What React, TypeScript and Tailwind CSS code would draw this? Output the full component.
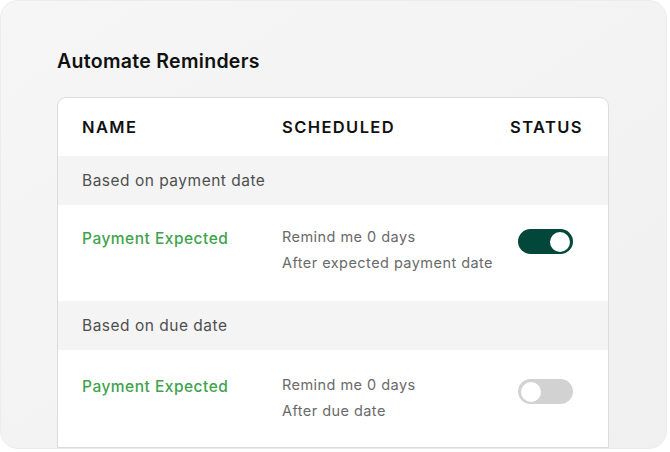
import React from "react";

function Toggle({ on }: { on: boolean }) {
  return (
    <div
      className={
        "flex h-[25px] w-[55px] items-center rounded-full px-[3px] " +
        (on ? "justify-end bg-[#03473a]" : "justify-start bg-[#d2d2d2]")
      }
    >
      <div className="h-[20px] w-[20px] rounded-full bg-white" />
    </div>
  );
}

function GroupRow({ label }: { label: string }) {
  return (
    <div className="flex h-[49px] items-center bg-[#f4f4f4] pl-[24px] text-[15.5px] tracking-[0.5px] text-[#4f4f4f]">
      {label}
    </div>
  );
}

function DataRow({ line2, on, low }: { line2: string; on: boolean; low?: boolean }) {
  return (
    <div className="flex h-[96px] bg-white pl-[24px]">
      <div className={"w-[200px] text-[15.5px] font-medium tracking-[0.5px] text-[#3fa34d] " + (low ? "pt-[25px]" : "pt-[22px]")}>
        Payment Expected
      </div>
      <div className={"w-[236px] text-[14.5px] leading-[26px] tracking-[0.45px] text-[#6a6a6a] " + (low ? "pt-[22px]" : "pt-[19px]")}>
        <div>Remind me 0 days</div>
        <div>{line2}</div>
      </div>
      <div className={low ? "pt-[29px]" : "pt-[24px]"}>
        <Toggle on={on} />
      </div>
    </div>
  );
}

export default function App() {
  return (
    <div className="h-[452px] w-[670px] bg-white" style={{ fontFamily: "Inter, 'Noto Sans', sans-serif" }}>
      <div className="flex h-[449px] w-[667px] flex-col overflow-hidden rounded-[18px] border border-[#ececec] bg-gradient-to-br from-[#f6f6f6] to-[#f0f0f0] pl-[56px] pr-[57px] pt-[46px]">
        <div className="text-[19.5px] font-semibold leading-[28px] tracking-[0.3px] text-[#111]">Automate Reminders</div>
        <div className="mt-[22px] flex-1 overflow-hidden rounded-t-[9px] border border-[#dcdcdc] bg-white">
          <div className="flex h-[58px] items-center pl-[24px] text-[16.5px] font-semibold tracking-[1.4px] text-[#111]">
            <div className="w-[200px]">NAME</div>
            <div className="w-[228px]">SCHEDULED</div>
            <div>STATUS</div>
          </div>
          <GroupRow label="Based on payment date" />
          <DataRow line2="After expected payment date" on={true} />
          <GroupRow label="Based on due date" />
          <DataRow line2="After due date" on={false} low />
        </div>
      </div>
    </div>
  );
}
